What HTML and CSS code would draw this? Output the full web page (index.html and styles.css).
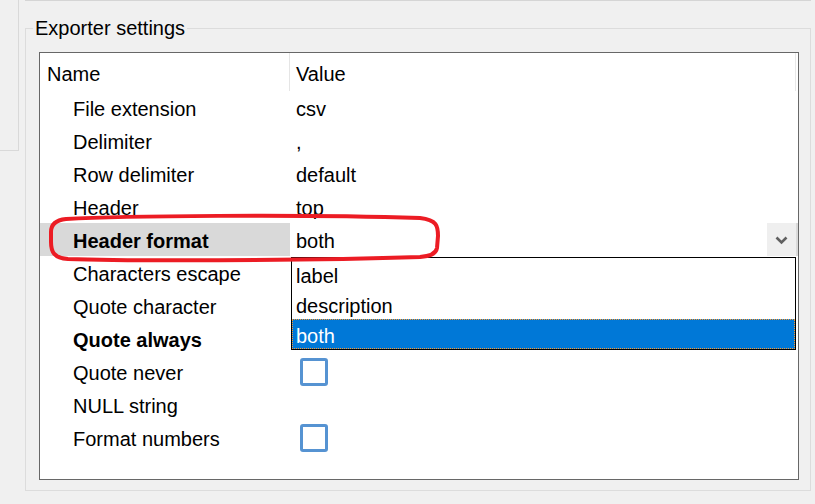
FILE: index.html
```html
<!DOCTYPE html>
<html>
<head>
<meta charset="utf-8">
<link rel="stylesheet" href="styles.css">
</head>
<body>
<div class="page">
  <div class="left-panel"></div>
  <div class="main">
    <div class="top-line"></div>
    <fieldset class="group">
      <legend class="group-title">Exporter settings</legend>
      <div class="grid">
        <div class="row head">
          <div class="cell name-h">Name</div>
          <div class="cell value-h">Value</div>
        </div>
        <div class="row"><div class="cell name">File extension</div><div class="cell value">csv</div></div>
        <div class="row"><div class="cell name">Delimiter</div><div class="cell value">,</div></div>
        <div class="row"><div class="cell name">Row delimiter</div><div class="cell value">default</div></div>
        <div class="row"><div class="cell name">Header</div><div class="cell value">top</div></div>
        <div class="row active">
          <div class="cell name selected bold">Header format</div>
          <div class="cell value editor">
            <span class="editor-text">both</span>
            <div class="drop-btn">
              <svg width="13" height="10" viewBox="0 0 13 10"><polyline points="1.5,2.5 6.5,7.5 11.5,2.5" fill="none" stroke="#606060" stroke-width="2.6"/></svg>
            </div>
            <div class="popup">
              <div class="opt">label</div>
              <div class="opt">description</div>
              <div class="opt current">both</div>
            </div>
          </div>
        </div>
        <div class="row"><div class="cell name">Characters escape</div><div class="cell value"></div></div>
        <div class="row"><div class="cell name">Quote character</div><div class="cell value"></div></div>
        <div class="row"><div class="cell name bold">Quote always</div><div class="cell value"></div></div>
        <div class="row"><div class="cell name">Quote never</div><div class="cell value"><span class="check"></span></div></div>
        <div class="row"><div class="cell name">NULL string</div><div class="cell value"></div></div>
        <div class="row"><div class="cell name">Format numbers</div><div class="cell value"><span class="check"></span></div></div>
        <svg class="mark" width="410" height="65" viewBox="0 0 410 65"><path d="M 26 14 C 80 11, 260 9, 380 13 C 397 15, 398 21, 398 31 L 397 43 C 396 49, 390 51, 380 52 C 260 56, 80 56, 28 54 C 14 53, 11 47, 11 37 L 11 27 C 11 19, 16 15, 26 14 Z" fill="none" stroke="#ec1c24" stroke-width="4"/></svg>
      </div>
    </fieldset>
  </div>
</div>
</body>
</html>
```

FILE: styles.css
```css
html, body {
  margin: 0;
  padding: 0;
  background: #f0f0f0;
}
body {
  font-family: "Liberation Sans", Arial, sans-serif;
  font-size: 20px;
  color: #000;
  width: 815px;
  height: 504px;
  overflow: hidden;
}
.page {
  display: flex;
  align-items: flex-start;
}
.left-panel {
  width: 18px;
  height: 150px;
  border-right: 1px solid #d9d9d9;
  border-bottom: 1px solid #d9d9d9;
  flex: none;
}
.main {
  margin-left: 6px;
  width: 786px;
  flex: none;
}
.top-line {
  height: 0;
  border-top: 1px solid #d5d5d5;
}
.group {
  margin: 15px 0 0 0;
  border: 1px solid #dcdcdc;
  padding: 12px 11px 10px 13px;
  min-width: 0;
}
.group-title {
  margin-left: -6px;
  padding: 0 2px;
  line-height: 24px;
}
.grid {
  position: relative;
  background: #fff;
  border: 1px solid #676767;
  height: 426px;
}
.row {
  display: flex;
  height: 33px;
}
.cell {
  box-sizing: border-box;
  white-space: nowrap;
}
.name {
  width: 250px;
  padding: 3px 0 0 33px;
  line-height: 30px;
  flex: none;
}
.value {
  flex: 1;
  padding: 3px 0 0 6px;
  line-height: 30px;
}
.row.head {
  height: 38px;
}
.name-h {
  width: 250px;
  flex: none;
  padding: 4px 0 0 7px;
  line-height: 34px;
  border-right: 1px solid #e5e5e5;
}
.value-h {
  width: 506px;
  flex: none;
  padding: 4px 0 0 6px;
  line-height: 34px;
  border-right: 1px solid #e8e8e8;
}
.bold {
  font-weight: bold;
}
.selected {
  background: #d9d9d9;
}
.editor {
  position: relative;
  display: flex;
  padding-top: 0;
}
.editor-text {
  flex: 1;
  padding-top: 3px;
  line-height: 30px;
}
.drop-btn {
  width: 31px;
  height: 33px;
  box-sizing: border-box;
  background: #efefef;
  border-right: 2px solid #dadada;
  display: flex;
  align-items: center;
  justify-content: center;
}
.popup {
  position: absolute;
  left: 1px;
  top: 34px;
  width: 505px;
  box-sizing: border-box;
  border: 1px solid #000;
  background: #fff;
  padding-top: 1px;
  z-index: 2;
}
.opt {
  height: 30px;
  box-sizing: border-box;
  padding: 4px 0 0 4px;
  line-height: 26px;
}
.opt.current {
  background: #0078d7;
  color: #fff;
  outline: 1px dotted #ff9a2e;
  outline-offset: -1px;
}
.check {
  display: inline-block;
  width: 28px;
  height: 28px;
  box-sizing: border-box;
  border: 3px solid #5693d2;
  border-radius: 3px;
  margin: 0 0 0 4px;
  vertical-align: top;
}
.mark {
  position: absolute;
  left: 0;
  top: 152px;
  z-index: 3;
  overflow: visible;
}
```
